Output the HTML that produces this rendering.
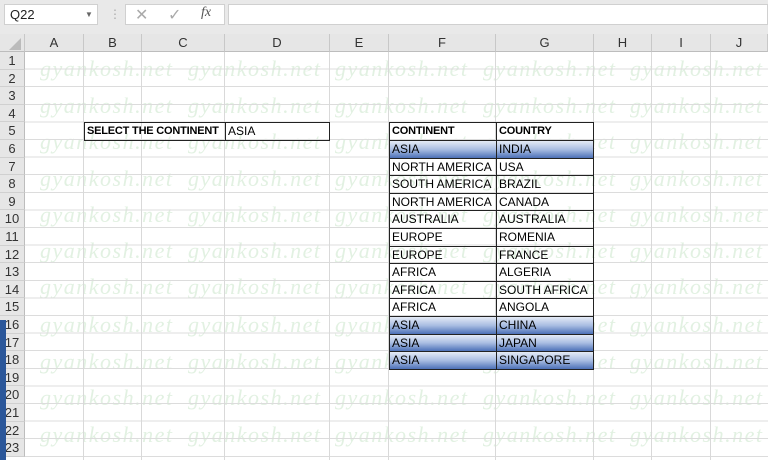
<!DOCTYPE html><html><head><style>
body{margin:0;width:768px;height:460px;overflow:hidden;background:#fff;font-family:"Liberation Sans",sans-serif;position:relative}
div,span{position:absolute;box-sizing:border-box}
.top{left:0;top:0;width:768px;height:34px;background:#e9e9e9}
.hdr{top:34px;height:18px;background:#e6e6e6;border-right:1px solid #c8c8c8;border-bottom:1px solid #bdbdbd;font-size:13px;color:#333;text-align:center;line-height:18px}
.rn{left:0;width:25px;height:17.6px;background:#e6e6e6;border-bottom:1px solid #d0d0d0;border-right:1px solid #bdbdbd;font-size:13px;color:#333;text-align:center;line-height:17px}
.vl{top:52px;width:1px;height:408px;background:#d9d9d9}
.grid{left:25px;top:52px;width:743px;height:408px;background:repeating-linear-gradient(to bottom,transparent 0,transparent 16.6px,#dcdcdc 16.6px,#dcdcdc 17.6px)}
.wm{font-family:"Liberation Serif",serif;font-style:italic;font-size:22px;color:#e2f1e2;letter-spacing:1.5px;white-space:nowrap}
.c{height:18.6px;border:1px solid #222;font-size:12px;line-height:17px;padding-left:2px;color:#000;white-space:nowrap}
.b{font-weight:bold;font-size:11px;letter-spacing:-0.2px}
.g{background:linear-gradient(to bottom,#e4ebf6 0%,#a9bde2 50%,#4c71b8 100%)}
</style></head><body>
<div class="top"></div>
<div style="left:4px;top:4px;width:94px;height:21px;background:#fff;border:1px solid #d0d0d0;font-size:13px;line-height:19px;padding-left:5px;color:#222">Q22<span style="left:80px;top:0;font-size:8px;color:#666">▼</span></div>
<div style="left:109px;top:7px;font-size:12px;color:#aaa;line-height:14px">⋮</div>
<div style="left:125px;top:4px;width:100px;height:21px;background:#fff;border:1px solid #d0d0d0"></div>
<div style="left:135px;top:5px;font-size:16px;color:#aaa">✕</div>
<div style="left:168px;top:5px;font-size:16px;color:#aaa">✓</div>
<div style="left:201px;top:5px;font-size:14px;font-style:italic;font-family:'Liberation Serif',serif;color:#555">fx</div>
<div style="left:228px;top:4px;width:540px;height:21px;background:#fff;border:1px solid #d0d0d0"></div>
<div class="hdr" style="left:0;width:25px"></div>
<div style="left:9px;top:38px;width:0;height:0;border-left:12px solid transparent;border-bottom:12px solid #bbb"></div>
<div class="hdr" style="left:25px;width:59px">A</div>
<div class="hdr" style="left:84px;width:58px">B</div>
<div class="hdr" style="left:142px;width:83px">C</div>
<div class="hdr" style="left:225px;width:105px">D</div>
<div class="hdr" style="left:330px;width:59px">E</div>
<div class="hdr" style="left:389px;width:107px">F</div>
<div class="hdr" style="left:496px;width:98px">G</div>
<div class="hdr" style="left:594px;width:58px">H</div>
<div class="hdr" style="left:652px;width:59px">I</div>
<div class="hdr" style="left:711px;width:57px">J</div>
<div class="wm" style="left:40px;top:56px">gyankosh.net</div><div class="wm" style="left:188px;top:56px">gyankosh.net</div><div class="wm" style="left:335px;top:56px">gyankosh.net</div><div class="wm" style="left:483px;top:56px">gyankosh.net</div><div class="wm" style="left:630px;top:56px">gyankosh.net</div>
<div class="wm" style="left:40px;top:93px">gyankosh.net</div><div class="wm" style="left:188px;top:93px">gyankosh.net</div><div class="wm" style="left:335px;top:93px">gyankosh.net</div><div class="wm" style="left:483px;top:93px">gyankosh.net</div><div class="wm" style="left:630px;top:93px">gyankosh.net</div>
<div class="wm" style="left:40px;top:129px">gyankosh.net</div><div class="wm" style="left:188px;top:129px">gyankosh.net</div><div class="wm" style="left:335px;top:129px">gyankosh.net</div><div class="wm" style="left:483px;top:129px">gyankosh.net</div><div class="wm" style="left:630px;top:129px">gyankosh.net</div>
<div class="wm" style="left:40px;top:166px">gyankosh.net</div><div class="wm" style="left:188px;top:166px">gyankosh.net</div><div class="wm" style="left:335px;top:166px">gyankosh.net</div><div class="wm" style="left:483px;top:166px">gyankosh.net</div><div class="wm" style="left:630px;top:166px">gyankosh.net</div>
<div class="wm" style="left:40px;top:202px">gyankosh.net</div><div class="wm" style="left:188px;top:202px">gyankosh.net</div><div class="wm" style="left:335px;top:202px">gyankosh.net</div><div class="wm" style="left:483px;top:202px">gyankosh.net</div><div class="wm" style="left:630px;top:202px">gyankosh.net</div>
<div class="wm" style="left:40px;top:238px">gyankosh.net</div><div class="wm" style="left:188px;top:238px">gyankosh.net</div><div class="wm" style="left:335px;top:238px">gyankosh.net</div><div class="wm" style="left:483px;top:238px">gyankosh.net</div><div class="wm" style="left:630px;top:238px">gyankosh.net</div>
<div class="wm" style="left:40px;top:274px">gyankosh.net</div><div class="wm" style="left:188px;top:274px">gyankosh.net</div><div class="wm" style="left:335px;top:274px">gyankosh.net</div><div class="wm" style="left:483px;top:274px">gyankosh.net</div><div class="wm" style="left:630px;top:274px">gyankosh.net</div>
<div class="wm" style="left:40px;top:312px">gyankosh.net</div><div class="wm" style="left:188px;top:312px">gyankosh.net</div><div class="wm" style="left:335px;top:312px">gyankosh.net</div><div class="wm" style="left:483px;top:312px">gyankosh.net</div><div class="wm" style="left:630px;top:312px">gyankosh.net</div>
<div class="wm" style="left:40px;top:349px">gyankosh.net</div><div class="wm" style="left:188px;top:349px">gyankosh.net</div><div class="wm" style="left:335px;top:349px">gyankosh.net</div><div class="wm" style="left:483px;top:349px">gyankosh.net</div><div class="wm" style="left:630px;top:349px">gyankosh.net</div>
<div class="wm" style="left:40px;top:385px">gyankosh.net</div><div class="wm" style="left:188px;top:385px">gyankosh.net</div><div class="wm" style="left:335px;top:385px">gyankosh.net</div><div class="wm" style="left:483px;top:385px">gyankosh.net</div><div class="wm" style="left:630px;top:385px">gyankosh.net</div>
<div class="wm" style="left:40px;top:422px">gyankosh.net</div><div class="wm" style="left:188px;top:422px">gyankosh.net</div><div class="wm" style="left:335px;top:422px">gyankosh.net</div><div class="wm" style="left:483px;top:422px">gyankosh.net</div><div class="wm" style="left:630px;top:422px">gyankosh.net</div>
<div class="grid"></div>
<div class="vl" style="left:83px"></div><div class="vl" style="left:141px"></div><div class="vl" style="left:224px"></div><div class="vl" style="left:329px"></div><div class="vl" style="left:388px"></div><div class="vl" style="left:495px"></div><div class="vl" style="left:593px"></div><div class="vl" style="left:651px"></div><div class="vl" style="left:710px"></div>
<div class="rn" style="top:52px">1</div><div class="rn" style="top:69.6px">2</div><div class="rn" style="top:87.2px">3</div><div class="rn" style="top:104.8px">4</div><div class="rn" style="top:122.4px">5</div><div class="rn" style="top:140px">6</div><div class="rn" style="top:157.6px">7</div><div class="rn" style="top:175.2px">8</div><div class="rn" style="top:192.8px">9</div><div class="rn" style="top:210.4px">10</div><div class="rn" style="top:228px">11</div><div class="rn" style="top:245.6px">12</div><div class="rn" style="top:263.2px">13</div><div class="rn" style="top:280.8px">14</div><div class="rn" style="top:298.4px">15</div><div class="rn" style="top:316px">16</div><div class="rn" style="top:333.6px">17</div><div class="rn" style="top:351.2px">18</div><div class="rn" style="top:368.8px">19</div><div class="rn" style="top:386.4px">20</div><div class="rn" style="top:404px">21</div><div class="rn" style="top:421.6px">22</div><div class="rn" style="top:439.2px">23</div>
<div style="left:0;top:320px;width:6px;height:140px;background:#2b579a"></div>
<div class="c b" style="left:84px;top:122px;width:142px">SELECT THE CONTINENT</div>
<div class="c" style="left:225px;top:122px;width:105px">ASIA</div>
<div class="c b" style="left:389px;top:122px;width:108px">CONTINENT</div><div class="c b" style="left:496px;top:122px;width:98px">COUNTRY</div>
<div class="c g" style="left:389px;top:140px;width:108px">ASIA</div><div class="c g" style="left:496px;top:140px;width:98px">INDIA</div>
<div class="c" style="left:389px;top:157.6px;width:108px">NORTH AMERICA</div><div class="c" style="left:496px;top:157.6px;width:98px">USA</div>
<div class="c" style="left:389px;top:175.2px;width:108px">SOUTH AMERICA</div><div class="c" style="left:496px;top:175.2px;width:98px">BRAZIL</div>
<div class="c" style="left:389px;top:192.8px;width:108px">NORTH AMERICA</div><div class="c" style="left:496px;top:192.8px;width:98px">CANADA</div>
<div class="c" style="left:389px;top:210.4px;width:108px">AUSTRALIA</div><div class="c" style="left:496px;top:210.4px;width:98px">AUSTRALIA</div>
<div class="c" style="left:389px;top:228px;width:108px">EUROPE</div><div class="c" style="left:496px;top:228px;width:98px">ROMENIA</div>
<div class="c" style="left:389px;top:245.6px;width:108px">EUROPE</div><div class="c" style="left:496px;top:245.6px;width:98px">FRANCE</div>
<div class="c" style="left:389px;top:263.2px;width:108px">AFRICA</div><div class="c" style="left:496px;top:263.2px;width:98px">ALGERIA</div>
<div class="c" style="left:389px;top:280.8px;width:108px">AFRICA</div><div class="c" style="left:496px;top:280.8px;width:98px">SOUTH AFRICA</div>
<div class="c" style="left:389px;top:298.4px;width:108px">AFRICA</div><div class="c" style="left:496px;top:298.4px;width:98px">ANGOLA</div>
<div class="c g" style="left:389px;top:316px;width:108px">ASIA</div><div class="c g" style="left:496px;top:316px;width:98px">CHINA</div>
<div class="c g" style="left:389px;top:333.6px;width:108px">ASIA</div><div class="c g" style="left:496px;top:333.6px;width:98px">JAPAN</div>
<div class="c g" style="left:389px;top:351.2px;width:108px">ASIA</div><div class="c g" style="left:496px;top:351.2px;width:98px">SINGAPORE</div>
</body></html>
